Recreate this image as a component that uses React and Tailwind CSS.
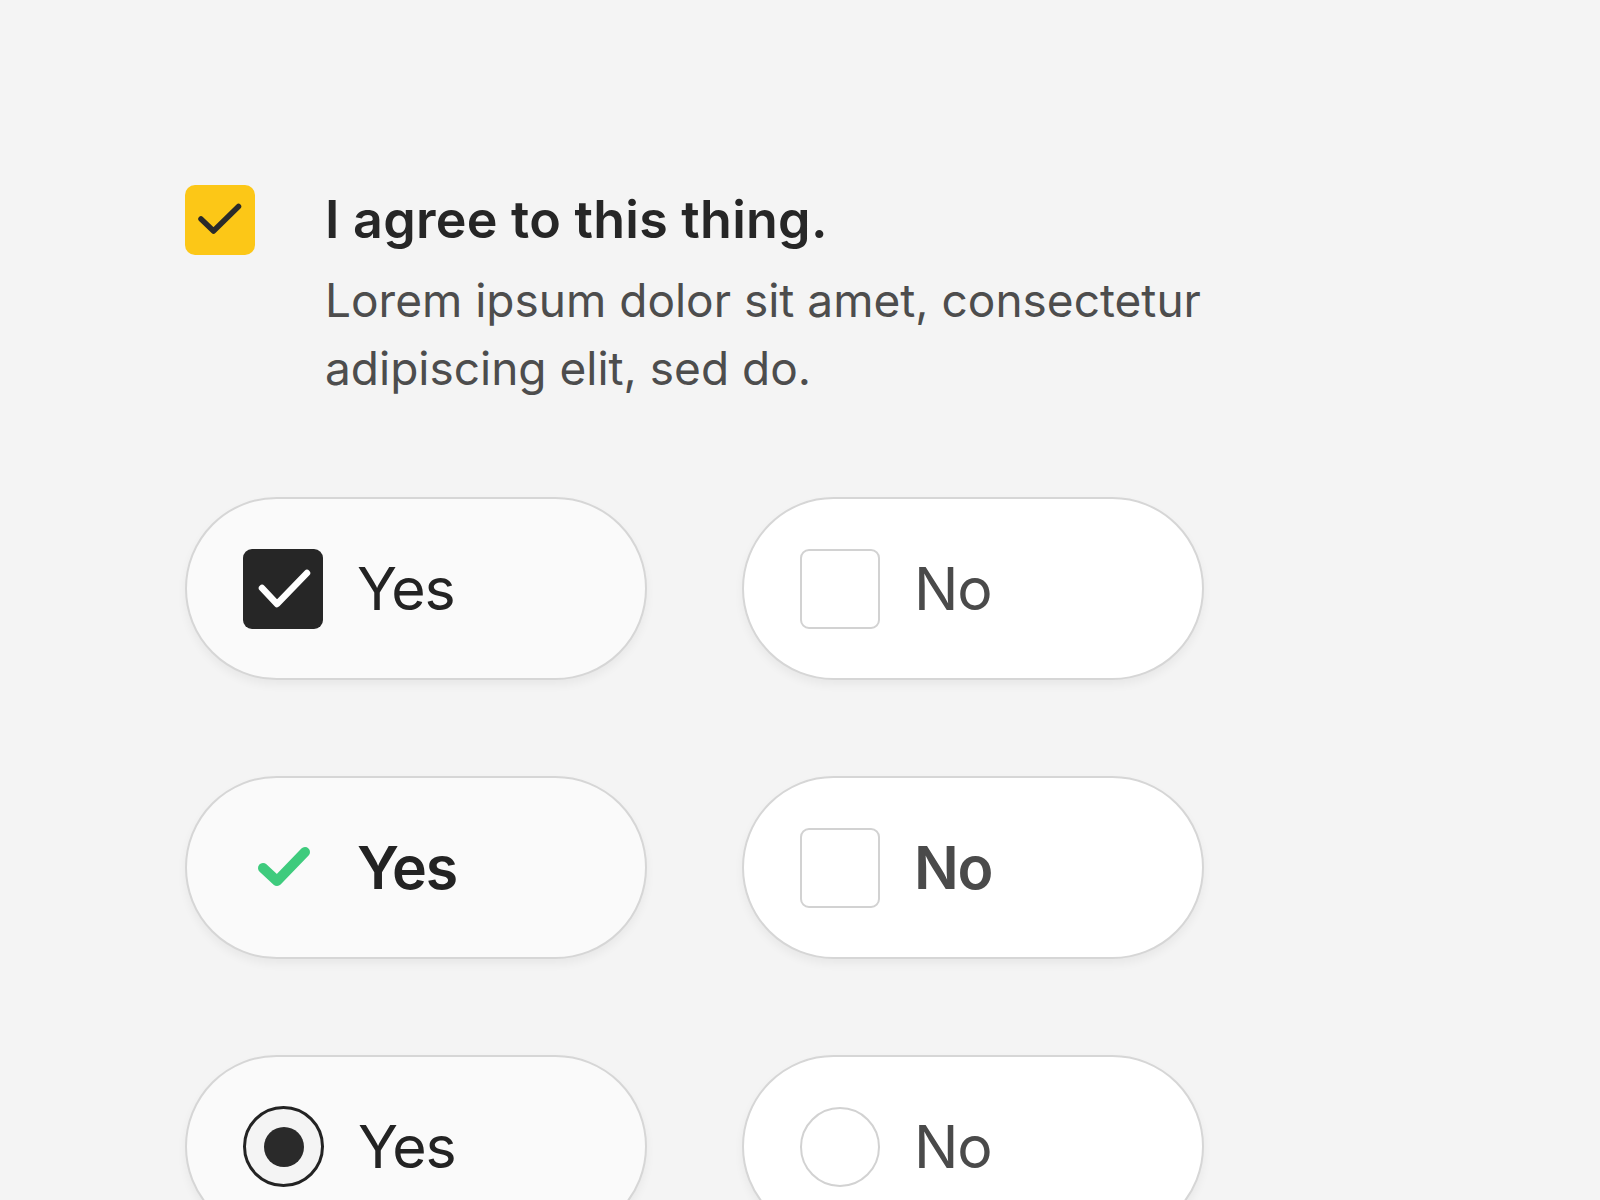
import React from "react";

const font = { fontFamily: "Inter, 'Noto Sans', sans-serif" };

const Pill = ({ selected, children }) => (
  <div
    className={`flex h-[183px] w-[462px] items-center rounded-full border-2 border-[#d6d6d6] pl-[56px] shadow-[0_5px_10px_rgba(0,0,0,0.05)] ${
      selected ? "bg-[#fafafa]" : "bg-white"
    }`}
  >
    {children}
  </div>
);

const Label = ({ bold, muted, children }) => (
  <span
    className={`ml-[34px] text-[59px] leading-none tracking-[-0.02em] ${
      bold ? "font-semibold" : "font-normal"
    } ${muted ? "text-[#4a4a4a]" : "text-[#232323]"}`}
  >
    {children}
  </span>
);

const EmptyBox = () => (
  <div className="h-[80px] w-[80px] rounded-[9px] border-2 border-[#d2d2d2] bg-white" />
);

export default function App() {
  return (
    <div className="h-screen overflow-hidden bg-[#f4f4f4] pl-[185px] pt-[185px]" style={font}>
      {/* Agreement */}
      <div className="flex items-start gap-[70px]">
        <div className="flex h-[70px] w-[70px] shrink-0 items-center justify-center rounded-[10px] bg-[#fcc717]">
          <svg width="70" height="70" viewBox="0 0 70 70" fill="none">
            <path
              d="M16 34 L28.5 46 L53.5 21.5"
              stroke="#2a2a2a"
              strokeWidth="5.5"
              strokeLinecap="round"
              strokeLinejoin="round"
            />
          </svg>
        </div>
        <div>
          <h1 className="text-[52px] font-semibold leading-[70px] tracking-[0.005em] text-[#262626]">
            I agree to this thing.
          </h1>
          <p className="mt-[11px] w-[950px] text-[46px] leading-[68px] tracking-[0em] text-[#4d4d4d]">
            Lorem ipsum dolor sit amet, consectetur
            <br />
            adipiscing elit, sed do.
          </p>
        </div>
      </div>

      {/* Options */}
      <div className="mt-[95px] grid w-[1020px] grid-cols-[462px_462px] gap-x-[95px] gap-y-[96px]">
        <Pill selected>
          <div className="flex h-[80px] w-[80px] items-center justify-center rounded-[9px] bg-[#262626]">
            <svg width="80" height="80" viewBox="0 0 80 80" fill="none">
              <path
                d="M19 39 L34 55 L64 24"
                stroke="#ffffff"
                strokeWidth="6.5"
                strokeLinecap="round"
                strokeLinejoin="round"
              />
            </svg>
          </div>
          <Label>Yes</Label>
        </Pill>
        <Pill>
          <EmptyBox />
          <Label muted>No</Label>
        </Pill>

        <Pill selected>
          <div className="flex h-[80px] w-[80px] items-center justify-center">
            <svg width="80" height="80" viewBox="0 0 80 80" fill="none">
              <path
                d="M20 40 L34 53 L62 24"
                stroke="#3ecb7d"
                strokeWidth="10"
                strokeLinecap="round"
                strokeLinejoin="round"
              />
            </svg>
          </div>
          <Label bold>Yes</Label>
        </Pill>
        <Pill>
          <EmptyBox />
          <Label bold muted>
            No
          </Label>
        </Pill>

        <Pill selected>
          <div className="flex h-[81px] w-[81px] items-center justify-center rounded-full border-[3px] border-[#232323] bg-[#f4f4f4]">
            <div className="h-[40px] w-[40px] rounded-full bg-[#2a2a2a]" />
          </div>
          <Label>Yes</Label>
        </Pill>
        <Pill>
          <div className="h-[80px] w-[80px] rounded-full border-2 border-[#d2d2d2] bg-white" />
          <Label muted>No</Label>
        </Pill>
      </div>
    </div>
  );
}
